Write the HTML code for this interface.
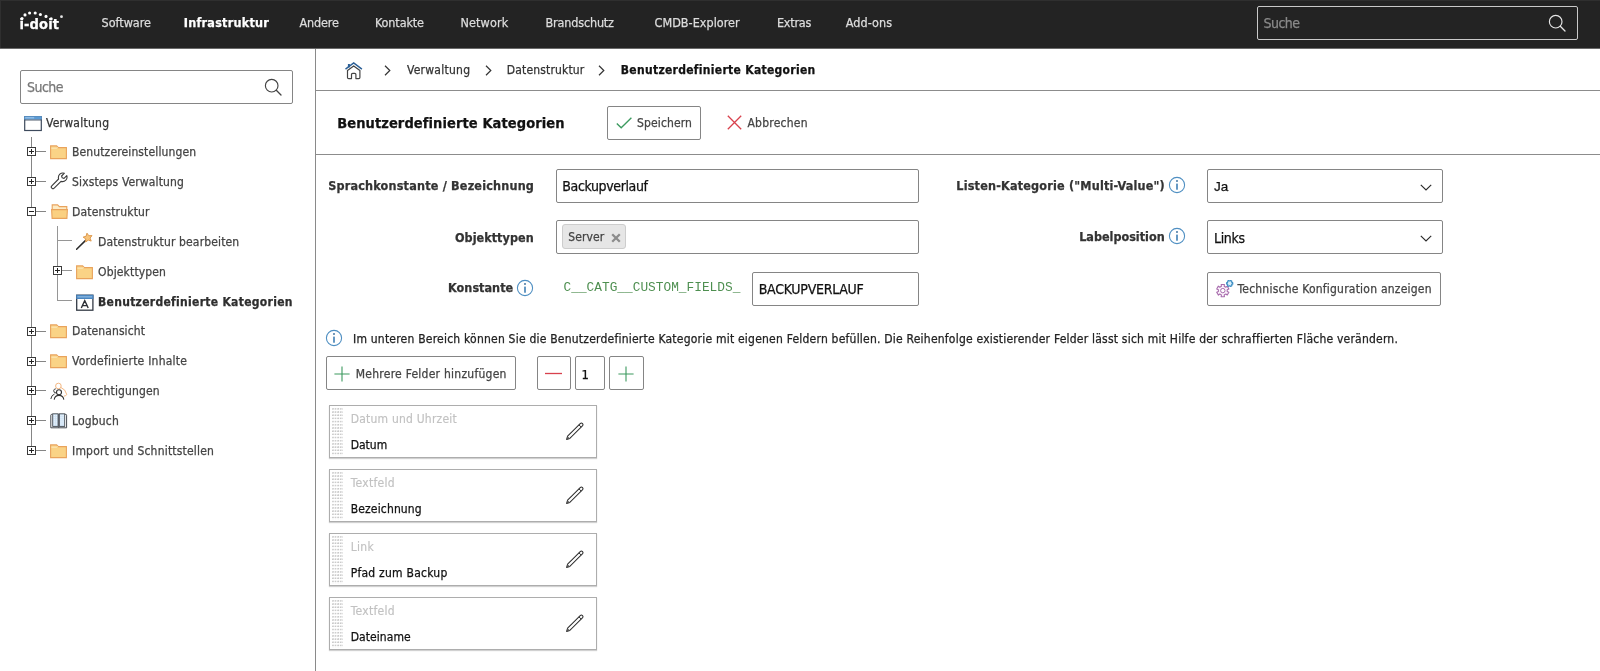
<!DOCTYPE html>
<html lang="de">
<head>
<meta charset="utf-8">
<title>i-doit - Benutzerdefinierte Kategorien</title>
<style>
*{box-sizing:border-box;margin:0;padding:0}
html,body{width:1600px;height:671px;overflow:hidden;background:#fff}
body{position:relative;font-family:"DejaVu Sans Condensed","Liberation Sans",sans-serif;font-size:12px;color:#444}
div,span,a,svg,header,nav,aside,main,section,ul,li,h1,label,button,input,p{position:absolute;display:block}
ul{list-style:none}
a{text-decoration:none;color:inherit}
.t{white-space:nowrap;-webkit-text-stroke:0.25px currentColor}
#top,#side,#main{will-change:transform}
#top{left:0;top:0;width:1600px;height:49px;background:#232323;border-bottom:1px solid #6a6a6a;z-index:2;box-shadow:inset 1px 1px 0 #2f2f2f}
#side{left:0;top:48px;width:315px;height:623px;background:#fff}
#divider{left:315px;top:48px;width:1px;height:623px;background:#8a8a8a}
#main{left:316px;top:48px;width:1284px;height:623px;background:#fff}
.hl{background:#8c8c8c;height:1px}
.inp{border:1px solid #858585;border-radius:2px;background:#fff}
.btn{border:1px solid #858585;border-radius:2px;background:#fff}
.card{border:1px solid #adadad;background:#fff;box-shadow:0 1px 1px rgba(0,0,0,.18)}
.grip{background-image:radial-gradient(circle at 1px 1px,#c8c8c8 0.7px,transparent 1.05px);background-size:2.6px 3.2px}
.tl{background:#858585}
.tl2{background:#969696}
</style>
</head>
<body>
<header id="top">
<a class="t" id="t0" style='left:19.4px;top:14px;font-size:14.5px;line-height:20px;color:#fff;font-weight:bold;letter-spacing:0.14px;'>i-doit</a>
<svg style="left:18px;top:10px" width="48" height="12" viewBox="0 0 48 12" ><circle cx="4" cy="8.6" r="1.55" fill="#fff"/><circle cx="7" cy="4.9" r="1.55" fill="#fff"/><circle cx="11.6" cy="3" r="1.55" fill="#fff"/><circle cx="17.2" cy="3" r="1.55" fill="#fff"/><circle cx="22.4" cy="4.5" r="1.55" fill="#fff"/><circle cx="28" cy="6.4" r="1.55" fill="#fff"/><circle cx="33.2" cy="8.7" r="1.55" fill="#fff"/><circle cx="43.5" cy="6.7" r="1.4" fill="#e4e4e4"/></svg>
<nav><ul><li><a class="t" id="t1" style='left:101.5px;top:13px;font-size:12.5px;line-height:20px;color:#ddd;letter-spacing:-0.00px;'>Software</a></li><li><a class="t" id="t2" style='left:183.8px;top:13px;font-size:12.5px;line-height:20px;color:#fff;font-weight:bold;letter-spacing:0.23px;'>Infrastruktur</a></li><li><a class="t" id="t3" style='left:299.5px;top:13px;font-size:12.5px;line-height:20px;color:#ddd;letter-spacing:-0.13px;'>Andere</a></li><li><a class="t" id="t4" style='left:375px;top:13px;font-size:12.5px;line-height:20px;color:#ddd;letter-spacing:-0.13px;'>Kontakte</a></li><li><a class="t" id="t5" style='left:460.4px;top:13px;font-size:12.5px;line-height:20px;color:#ddd;letter-spacing:0.14px;'>Network</a></li><li><a class="t" id="t6" style='left:545.5px;top:13px;font-size:12.5px;line-height:20px;color:#ddd;letter-spacing:-0.16px;'>Brandschutz</a></li><li><a class="t" id="t7" style='left:654.6px;top:13px;font-size:12.5px;line-height:20px;color:#ddd;letter-spacing:0.02px;'>CMDB-Explorer</a></li><li><a class="t" id="t8" style='left:777px;top:13px;font-size:12.5px;line-height:20px;color:#ddd;letter-spacing:-0.23px;'>Extras</a></li><li><a class="t" id="t9" style='left:845.8px;top:13px;font-size:12.5px;line-height:20px;color:#ddd;letter-spacing:0.05px;'>Add-ons</a></li></ul></nav>
<div style="left:1257px;top:6px;width:321px;height:34px;border:1px solid #c9c9c9;border-radius:2px;"></div>
<span class="t" id="t10" style='left:1263.5px;top:13px;font-size:14px;line-height:20px;color:#8a8a8a;letter-spacing:-0.54px;'>Suche</span>
<svg style="left:1548px;top:14px" width="18" height="18" viewBox="0 0 18 18" ><circle cx="7.7" cy="7.7" r="6.3" fill="none" stroke="#e6e6e6" stroke-width="1.15"/><path d="M12.3 12.3 L17 17" stroke="#e6e6e6" stroke-width="1.3" stroke-linecap="round"/></svg>
</header>
<aside id="side">
<div class="inp" style="left:20px;top:22px;width:273px;height:34px;"></div>
<span class="t" id="t11" style='left:27px;top:29px;font-size:14px;line-height:20px;color:#777;letter-spacing:-0.54px;'>Suche</span>
<svg style="left:264.3px;top:29.6px" width="18" height="18" viewBox="0 0 18 18" ><circle cx="7.7" cy="7.7" r="6.3" fill="none" stroke="#444" stroke-width="1.15"/><path d="M12.3 12.3 L17 17" stroke="#444" stroke-width="1.3" stroke-linecap="round"/></svg>
<svg style="left:24px;top:67.5px" width="18" height="16" viewBox="0 0 18 16" ><rect x="0.7" y="0.7" width="16.6" height="13.8" fill="#fff" stroke="#3d4a5c" stroke-width="1.2"/><rect x="0.2" y="0.2" width="17.6" height="3.4" fill="#5b9bd5"/><rect x="1.2" y="1.2" width="9" height="1.2" fill="#9cc6ec"/><path d="M0.7 4 H17.3" stroke="#3d4a5c" stroke-width="0.9"/></svg>
<span class="t" id="t12" style='left:46px;top:65px;font-size:12px;line-height:20px;color:#333;letter-spacing:0.25px;'>Verwaltung</span>
<div class="tl" style="left:31px;top:89px;width:1px;height:313px;"></div>
<div class="tl tl2" style="left:57px;top:178px;width:1px;height:75px;"></div>
<div class="tl" style="left:31px;top:103px;width:14.5px;height:1px;"></div>
<svg style="left:27px;top:99px" width="9" height="9" viewBox="0 0 9 9" shape-rendering="crispEdges"><rect x="0.5" y="0.5" width="8" height="8" fill="#fff" stroke="#3c3c3c"/><path d="M2 4.5 H7 M4.5 2 V7" stroke="#222"/></svg>
<svg style="left:50.2px;top:96.5px" width="17" height="15" viewBox="0 0 17 15" ><path d="M0.6 0.9 H6.6 L8.4 2.6 H16.4 V13.6 H0.6 Z" fill="#fad386" stroke="#e9a35c" stroke-width="1.1" stroke-linejoin="miter"/><path d="M1.4 3.2 H6.6 L7.6 2.4" fill="none" stroke="#fde9bd" stroke-width="1"/></svg>
<a class="t" id="t13" style='left:72px;top:94px;font-size:12px;line-height:20px;color:#444;letter-spacing:0.13px;'>Benutzereinstellungen</a>
<div class="tl" style="left:31px;top:133px;width:14.5px;height:1px;"></div>
<svg style="left:27px;top:129px" width="9" height="9" viewBox="0 0 9 9" shape-rendering="crispEdges"><rect x="0.5" y="0.5" width="8" height="8" fill="#fff" stroke="#3c3c3c"/><path d="M2 4.5 H7 M4.5 2 V7" stroke="#222"/></svg>
<svg style="left:50px;top:124.3px" width="18" height="18" viewBox="0 0 18 18" ><path d="M1.8 16.2 Q0.6 15 1.8 13.8 L8.6 7 Q7.8 4.2 9.8 2.2 Q11.8 0.4 14.4 1.2 L11.6 4 L12.2 5.8 L14 6.4 L16.8 3.6 Q17.6 6.2 15.8 8.2 Q13.8 10.2 11 9.4 L4.2 16.2 Q3 17.4 1.8 16.2 Z" fill="#fff" stroke="#3a3a3a" stroke-width="1.1" stroke-linejoin="round"/></svg>
<a class="t" id="t14" style='left:72px;top:124px;font-size:12px;line-height:20px;color:#444;letter-spacing:0.14px;'>Sixsteps Verwaltung</a>
<div class="tl" style="left:31px;top:163px;width:14.5px;height:1px;"></div>
<svg style="left:27px;top:159px" width="9" height="9" viewBox="0 0 9 9" shape-rendering="crispEdges"><rect x="0.5" y="0.5" width="8" height="8" fill="#fff" stroke="#3c3c3c"/><path d="M2 4.5 H7" stroke="#222"/></svg>
<svg style="left:50.6px;top:156px" width="17" height="16" viewBox="0 0 17 16" ><path d="M1.2 5.6 V0.9 H6.6 L8.4 2.6 H15.8 V5.6" fill="#fdebc4" stroke="#e9a35c" stroke-width="1.1" stroke-linejoin="miter"/><path d="M0.6 5.6 H16.4 L15.9 14.4 H1.1 Z" fill="#fad081" stroke="#e9a35c" stroke-width="1.1" stroke-linejoin="miter"/></svg>
<a class="t" id="t15" style='left:72px;top:154px;font-size:12px;line-height:20px;color:#444;letter-spacing:0.16px;'>Datenstruktur</a>
<div class="tl tl2" style="left:57px;top:192px;width:14.5px;height:1px;"></div>
<svg style="left:76px;top:184.2px" width="18" height="18" viewBox="0 0 18 18" ><path d="M0.6 17.2 L9.6 8.4" stroke="#2b2b2b" stroke-width="1.5" stroke-linecap="round"/><path d="M10.98 1.17 L12.81 3.73 L15.95 3.59 L14.08 6.12 L15.18 9.06 L12.20 8.07 L9.74 10.02 L9.77 6.88 L7.15 5.15 L10.15 4.20 Z" fill="#f8c47a" stroke="#dd9a50" stroke-width="1" stroke-linejoin="round"/></svg>
<a class="t" id="t16" style='left:98px;top:184px;font-size:12px;line-height:20px;color:#444;letter-spacing:0.15px;'>Datenstruktur bearbeiten</a>
<div class="tl tl2" style="left:57px;top:222px;width:14.5px;height:1px;"></div>
<svg style="left:53px;top:218px" width="9" height="9" viewBox="0 0 9 9" shape-rendering="crispEdges"><rect x="0.5" y="0.5" width="8" height="8" fill="#fff" stroke="#3c3c3c"/><path d="M2 4.5 H7 M4.5 2 V7" stroke="#222"/></svg>
<svg style="left:76.2px;top:216.7px" width="17" height="15" viewBox="0 0 17 15" ><path d="M0.6 0.9 H6.6 L8.4 2.6 H16.4 V13.6 H0.6 Z" fill="#fad386" stroke="#e9a35c" stroke-width="1.1" stroke-linejoin="miter"/><path d="M1.4 3.2 H6.6 L7.6 2.4" fill="none" stroke="#fde9bd" stroke-width="1"/></svg>
<a class="t" id="t17" style='left:98px;top:214px;font-size:12px;line-height:20px;color:#444;letter-spacing:0.15px;'>Objekttypen</a>
<div class="tl tl2" style="left:57px;top:252px;width:14.5px;height:1px;"></div>
<svg style="left:76px;top:245.7px" width="18" height="17" viewBox="0 0 18 17" ><rect x="0.7" y="1.2" width="16.2" height="15" fill="#fff" stroke="#333a45" stroke-width="1.3"/><rect x="0.2" y="0.8" width="17.2" height="4.2" fill="#4a86c0"/><path d="M1.4 2.9 H16.2" stroke="#a9d0f2" stroke-width="0.9"/><path d="M5.3 14 L8.75 6.6 L12.2 14 M6.6 11.6 H10.9" fill="none" stroke="#2c2f36" stroke-width="1.4"/></svg>
<a class="t" id="t18" style='left:98px;top:244px;font-size:12px;line-height:20px;color:#2e2e2e;font-weight:bold;letter-spacing:0.30px;'>Benutzerdefinierte Kategorien</a>
<div class="tl" style="left:31px;top:283px;width:14.5px;height:1px;"></div>
<svg style="left:27px;top:279px" width="9" height="9" viewBox="0 0 9 9" shape-rendering="crispEdges"><rect x="0.5" y="0.5" width="8" height="8" fill="#fff" stroke="#3c3c3c"/><path d="M2 4.5 H7 M4.5 2 V7" stroke="#222"/></svg>
<svg style="left:50.2px;top:276.1px" width="17" height="15" viewBox="0 0 17 15" ><path d="M0.6 0.9 H6.6 L8.4 2.6 H16.4 V13.6 H0.6 Z" fill="#fad386" stroke="#e9a35c" stroke-width="1.1" stroke-linejoin="miter"/><path d="M1.4 3.2 H6.6 L7.6 2.4" fill="none" stroke="#fde9bd" stroke-width="1"/></svg>
<a class="t" id="t19" style='left:72px;top:273px;font-size:12px;line-height:20px;color:#444;letter-spacing:0.11px;'>Datenansicht</a>
<div class="tl" style="left:31px;top:313px;width:14.5px;height:1px;"></div>
<svg style="left:27px;top:309px" width="9" height="9" viewBox="0 0 9 9" shape-rendering="crispEdges"><rect x="0.5" y="0.5" width="8" height="8" fill="#fff" stroke="#3c3c3c"/><path d="M2 4.5 H7 M4.5 2 V7" stroke="#222"/></svg>
<svg style="left:50.2px;top:306px" width="17" height="15" viewBox="0 0 17 15" ><path d="M0.6 0.9 H6.6 L8.4 2.6 H16.4 V13.6 H0.6 Z" fill="#fad386" stroke="#e9a35c" stroke-width="1.1" stroke-linejoin="miter"/><path d="M1.4 3.2 H6.6 L7.6 2.4" fill="none" stroke="#fde9bd" stroke-width="1"/></svg>
<a class="t" id="t20" style='left:72px;top:303px;font-size:12px;line-height:20px;color:#444;letter-spacing:0.24px;'>Vordefinierte Inhalte</a>
<div class="tl" style="left:31px;top:342px;width:14.5px;height:1px;"></div>
<svg style="left:27px;top:338px" width="9" height="9" viewBox="0 0 9 9" shape-rendering="crispEdges"><rect x="0.5" y="0.5" width="8" height="8" fill="#fff" stroke="#3c3c3c"/><path d="M2 4.5 H7 M4.5 2 V7" stroke="#222"/></svg>
<svg style="left:50px;top:333.9px" width="18" height="18" viewBox="0 0 18 18" ><circle cx="8.4" cy="4" r="2.8" fill="none" stroke="#f4b781" stroke-width="1"/><path d="M10.8 5.4 Q15.6 7.2 16.8 12.6 Q15.6 14 13.8 14.2" fill="none" stroke="#f4b781" stroke-width="1"/><path d="M6 11 Q3.6 10.8 3.7 8.6 Q3.9 6.9 5.8 6.8" fill="none" stroke="#3a3a3a" stroke-width="1"/><path d="M0.8 17 Q1.4 13 4.6 12" fill="none" stroke="#3a3a3a" stroke-width="1"/><circle cx="9" cy="10.2" r="2.5" fill="#fff" stroke="#333" stroke-width="1.1"/><path d="M4.2 17.6 Q4.8 13.4 9 13.4 Q13.2 13.4 13.8 17.6" fill="none" stroke="#333" stroke-width="1.1"/></svg>
<a class="t" id="t21" style='left:72px;top:333px;font-size:12px;line-height:20px;color:#444;letter-spacing:0.15px;'>Berechtigungen</a>
<div class="tl" style="left:31px;top:372px;width:14.5px;height:1px;"></div>
<svg style="left:27px;top:368px" width="9" height="9" viewBox="0 0 9 9" shape-rendering="crispEdges"><rect x="0.5" y="0.5" width="8" height="8" fill="#fff" stroke="#3c3c3c"/><path d="M2 4.5 H7 M4.5 2 V7" stroke="#222"/></svg>
<svg style="left:50px;top:364.8px" width="18" height="17" viewBox="0 0 18 17" ><path d="M2.4 1.4 H1.6 Q0.8 1.4 0.8 2.2 V14.8 H16.6 V2.2 Q16.6 1.4 15.8 1.4 H15" fill="#fff" stroke="#454b52" stroke-width="1" stroke-linejoin="round"/><rect x="2.7" y="0.8" width="5.4" height="12.6" fill="#cfe3f5" stroke="#454b52" stroke-width="0.9"/><rect x="9.3" y="0.8" width="5.4" height="12.6" fill="#cfe3f5" stroke="#454b52" stroke-width="0.9"/><path d="M4.4 2 V12.4 M6.4 2 V12.4 M11 2 V12.4 M13 2 V12.4" stroke="#f5f9fd" stroke-width="0.8" stroke-dasharray="1.2 0.9"/><path d="M8.7 1 V14.8" stroke="#454b52" stroke-width="0.9"/></svg>
<a class="t" id="t22" style='left:72px;top:363px;font-size:12px;line-height:20px;color:#444;letter-spacing:0.17px;'>Logbuch</a>
<div class="tl" style="left:31px;top:402px;width:14.5px;height:1px;"></div>
<svg style="left:27px;top:398px" width="9" height="9" viewBox="0 0 9 9" shape-rendering="crispEdges"><rect x="0.5" y="0.5" width="8" height="8" fill="#fff" stroke="#3c3c3c"/><path d="M2 4.5 H7 M4.5 2 V7" stroke="#222"/></svg>
<svg style="left:50.2px;top:395.9px" width="17" height="15" viewBox="0 0 17 15" ><path d="M0.6 0.9 H6.6 L8.4 2.6 H16.4 V13.6 H0.6 Z" fill="#fad386" stroke="#e9a35c" stroke-width="1.1" stroke-linejoin="miter"/><path d="M1.4 3.2 H6.6 L7.6 2.4" fill="none" stroke="#fde9bd" stroke-width="1"/></svg>
<a class="t" id="t23" style='left:72px;top:393px;font-size:12px;line-height:20px;color:#444;letter-spacing:0.20px;'>Import und Schnittstellen</a>
</aside>
<div id="divider"></div>
<main id="main">
<svg style="left:29px;top:13.5px" width="18" height="18" viewBox="0 0 18 18" ><path d="M3.9 2 V5.4" stroke="#2b5f96" stroke-width="2"/><path d="M0.5 7.2 L8.7 1 L16.9 7.2" fill="none" stroke="#2b5f96" stroke-width="1.5" stroke-linejoin="miter"/><path d="M2.5 8.6 L8.7 3.9 L14.9 8.6 V15.4 Q14.9 16.6 13.7 16.6 H10.9 V12.6 Q10.9 11.4 9.7 11.4 H7.7 Q6.5 11.4 6.5 12.6 V16.6 H3.7 Q2.5 16.6 2.5 15.4 Z" fill="none" stroke="#444" stroke-width="1.2" stroke-linejoin="round"/></svg>
<svg style="left:68px;top:16.5px" width="7" height="11" viewBox="0 0 7 11" ><path d="M1 0.8 L5.8 5.5 L1 10.2" fill="none" stroke="#333" stroke-width="1.2"/></svg>
<a class="t" id="t24" style='left:91px;top:12px;font-size:12px;line-height:20px;color:#333;letter-spacing:0.25px;'>Verwaltung</a>
<svg style="left:169px;top:16.5px" width="7" height="11" viewBox="0 0 7 11" ><path d="M1 0.8 L5.8 5.5 L1 10.2" fill="none" stroke="#333" stroke-width="1.2"/></svg>
<a class="t" id="t25" style='left:190.8px;top:12px;font-size:12px;line-height:20px;color:#333;letter-spacing:0.16px;'>Datenstruktur</a>
<svg style="left:282px;top:16.5px" width="7" height="11" viewBox="0 0 7 11" ><path d="M1 0.8 L5.8 5.5 L1 10.2" fill="none" stroke="#333" stroke-width="1.2"/></svg>
<span class="t" id="t26" style='left:304.8px;top:12px;font-size:12px;line-height:20px;color:#111;font-weight:bold;letter-spacing:0.30px;'>Benutzerdefinierte Kategorien</span>
<div class="hl" style="left:0px;top:42px;width:1284px;height:1px;"></div>
<h1 class="t" id="t27" style='left:21.2px;top:65px;font-size:14.5px;line-height:20px;color:#111;font-weight:bold;letter-spacing:0.09px;'>Benutzerdefinierte Kategorien</h1>
<div class="btn" style="left:291px;top:58px;width:94px;height:34px;"></div>
<svg style="left:300px;top:69.3px" width="17" height="13" viewBox="0 0 17 13" ><path d="M0.8 6.4 L5.2 10.8 L15.4 0.8" fill="none" stroke="#3c9a5f" stroke-width="1.35"/></svg>
<span class="t" id="t28" style='left:321px;top:65px;font-size:12px;line-height:20px;color:#444;letter-spacing:0.14px;'>Speichern</span>
<svg style="left:411.3px;top:67.2px" width="15" height="15" viewBox="0 0 15 15" ><path d="M0.8 0.8 L14.2 14.2 M14.2 0.8 L0.8 14.2" fill="none" stroke="#d8414d" stroke-width="1.3"/></svg>
<span class="t" id="t29" style='left:431.5px;top:65px;font-size:12px;line-height:20px;color:#444;letter-spacing:0.23px;'>Abbrechen</span>
<div class="hl" style="left:0px;top:106px;width:1284px;height:1px;"></div>
<label class="t" id="t30" style='left:12.2px;top:128px;font-size:12.5px;line-height:20px;color:#333;font-weight:bold;letter-spacing:0.19px;'>Sprachkonstante / Bezeichnung</label>
<div class="inp" style="left:240px;top:121px;width:363px;height:34px;"></div>
<span class="t" id="t31" style='left:246.3px;top:128px;font-size:14px;line-height:20px;color:#111;letter-spacing:-0.37px;'>Backupverlauf</span>
<label class="t" id="t32" style='left:139px;top:180px;font-size:12.5px;line-height:20px;color:#333;font-weight:bold;letter-spacing:0.03px;'>Objekttypen</label>
<div class="inp" style="left:240px;top:172px;width:363px;height:34px;"></div>
<div style="left:246px;top:176px;width:64px;height:25px;background:#e6e6e6;border:1px solid #cdcdcd;border-radius:3px;"></div>
<span class="t" id="t33" style='left:252.3px;top:179px;font-size:12px;line-height:20px;color:#444;letter-spacing:0.12px;'>Server</span>
<svg style="left:295px;top:185px" width="10" height="10" viewBox="0 0 10 10" ><path d="M1.2 1.2 L8.8 8.8 M8.8 1.2 L1.2 8.8" stroke="#8c8c8c" stroke-width="2.3"/></svg>
<label class="t" id="t34" style='left:132.1px;top:230px;font-size:12.5px;line-height:20px;color:#333;font-weight:bold;letter-spacing:0.02px;'>Konstante</label>
<svg style="left:200px;top:230.5px" width="18" height="18" viewBox="0 0 18 18" ><circle cx="9" cy="9" r="7.6" fill="#fff" stroke="#4f8fc2" stroke-width="1.1"/><rect x="8.2" y="7.6" width="1.6" height="6.2" rx="0.5" fill="#3f7fb5"/><circle cx="9" cy="5" r="1.05" fill="#4f7fa8"/></svg>
<span class="t" id="t35" style='left:247.5px;top:230px;font-size:12.8px;line-height:20px;color:#4e8f50;font-family:"Liberation Mono","DejaVu Sans Mono",monospace;letter-spacing:0.01px;-webkit-text-stroke:0;'>C__CATG__CUSTOM_FIELDS_</span>
<div class="inp" style="left:436px;top:224px;width:167px;height:34px;"></div>
<span class="t" id="t36" style='left:442.7px;top:231px;font-size:14px;line-height:20px;color:#111;letter-spacing:-0.26px;'>BACKUPVERLAUF</span>
<label class="t" id="t37" style='left:640.3px;top:128px;font-size:12.5px;line-height:20px;color:#333;font-weight:bold;letter-spacing:0.19px;'>Listen-Kategorie ("Multi-Value")</label>
<svg style="left:851.7px;top:127.9px" width="18" height="18" viewBox="0 0 18 18" ><circle cx="9" cy="9" r="7.6" fill="#fff" stroke="#4f8fc2" stroke-width="1.1"/><rect x="8.2" y="7.6" width="1.6" height="6.2" rx="0.5" fill="#3f7fb5"/><circle cx="9" cy="5" r="1.05" fill="#4f7fa8"/></svg>
<div class="inp" style="left:891px;top:121px;width:236px;height:34px;"></div>
<span class="t" id="t38" style='left:898px;top:129px;font-size:13.5px;line-height:20px;color:#111;font-family:"Liberation Sans",sans-serif;'>Ja</span>
<svg style="left:1103.5px;top:135.5px" width="12" height="7" viewBox="0 0 12 7" ><path d="M0.8 0.8 L6 6 L11.2 0.8" fill="none" stroke="#2a2a2a" stroke-width="1.15"/></svg>
<label class="t" id="t39" style='left:763.2px;top:179px;font-size:12.5px;line-height:20px;color:#333;font-weight:bold;letter-spacing:-0.01px;'>Labelposition</label>
<svg style="left:851.7px;top:179.4px" width="18" height="18" viewBox="0 0 18 18" ><circle cx="9" cy="9" r="7.6" fill="#fff" stroke="#4f8fc2" stroke-width="1.1"/><rect x="8.2" y="7.6" width="1.6" height="6.2" rx="0.5" fill="#3f7fb5"/><circle cx="9" cy="5" r="1.05" fill="#4f7fa8"/></svg>
<div class="inp" style="left:891px;top:172px;width:236px;height:34px;"></div>
<span class="t" id="t40" style='left:898px;top:180px;font-size:14px;line-height:20px;color:#111;letter-spacing:-0.34px;'>Links</span>
<svg style="left:1103.5px;top:187px" width="12" height="7" viewBox="0 0 12 7" ><path d="M0.8 0.8 L6 6 L11.2 0.8" fill="none" stroke="#2a2a2a" stroke-width="1.15"/></svg>
<div class="btn" style="left:891px;top:224px;width:234px;height:34px;"></div>
<svg style="left:899.5px;top:232px" width="18" height="18" viewBox="0 0 18 18" ><path d="M12.89 12.23 L11.25 15.05 L9.81 13.94 L8.19 14.88 L8.43 16.69 L5.17 16.69 L5.41 14.88 L3.79 13.94 L2.35 15.05 L0.71 12.23 L2.40 11.54 L2.40 9.66 L0.71 8.97 L2.35 6.15 L3.79 7.26 L5.41 6.32 L5.17 4.51 L8.43 4.51 L8.19 6.32 L9.81 7.26 L11.25 6.15 L12.89 8.97 L11.20 9.66 L11.20 11.54 Z" fill="#fbf3fb" stroke="#a86cad" stroke-width="1.1" stroke-linejoin="round"/><circle cx="6.8" cy="10.6" r="2.2" fill="#fff" stroke="#a86cad" stroke-width="1"/><path d="M16.79 2.57 L16.79 4.23 L15.98 4.14 L15.48 5.01 L15.96 5.66 L14.53 6.49 L14.20 5.75 L13.20 5.75 L12.87 6.49 L11.44 5.66 L11.92 5.01 L11.42 4.14 L10.61 4.23 L10.61 2.57 L11.42 2.66 L11.92 1.79 L11.44 1.14 L12.87 0.31 L13.20 1.05 L14.20 1.05 L14.53 0.31 L15.96 1.14 L15.48 1.79 L15.98 2.66 Z" fill="#d8effb" stroke="#3f8fc4" stroke-width="1.1" stroke-linejoin="round"/></svg>
<span class="t" id="t41" style='left:921.5px;top:231px;font-size:12px;line-height:20px;color:#444;letter-spacing:0.22px;'>Technische Konfiguration anzeigen</span>
<svg style="left:9px;top:280.5px" width="18" height="18" viewBox="0 0 18 18" ><circle cx="9" cy="9" r="7.6" fill="#fff" stroke="#4f8fc2" stroke-width="1.1"/><rect x="8.2" y="7.6" width="1.6" height="6.2" rx="0.5" fill="#3f7fb5"/><circle cx="9" cy="5" r="1.05" fill="#4f7fa8"/></svg>
<p class="t" id="t42" style='left:37px;top:281px;font-size:12px;line-height:20px;color:#222;letter-spacing:0.22px;'>Im unteren Bereich können Sie die Benutzerdefinierte Kategorie mit eigenen Feldern befüllen. Die Reihenfolge existierender Felder lässt sich mit Hilfe der schraffierten Fläche verändern.</p>
<div class="btn" style="left:10px;top:308px;width:190px;height:34px;"></div>
<svg style="left:18px;top:317.5px" width="16" height="16" viewBox="0 0 16 16" ><path d="M8 0.4 V15.6 M0.4 8 H15.6" stroke="#3c9a5f" stroke-width="1.1"/></svg>
<span class="t" id="t43" style='left:39.8px;top:316px;font-size:12px;line-height:20px;color:#444;letter-spacing:0.25px;'>Mehrere Felder hinzufügen</span>
<div class="btn" style="left:221px;top:308px;width:34px;height:34px;"></div>
<svg style="left:229px;top:324px" width="17" height="3" viewBox="0 0 17 3" ><path d="M0 1.5 H17" stroke="#d8414d" stroke-width="1.3"/></svg>
<div class="inp" style="left:259px;top:308px;width:30px;height:34px;"></div>
<span class="t" id="t44" style='left:265.6px;top:317px;font-size:13px;line-height:20px;color:#111;'>1</span>
<div class="btn" style="left:293px;top:308px;width:35px;height:34px;"></div>
<svg style="left:302px;top:317.5px" width="16" height="16" viewBox="0 0 16 16" ><path d="M8 0.4 V15.6 M0.4 8 H15.6" stroke="#3c9a5f" stroke-width="1.1"/></svg>
<div class="card" style="left:13px;top:357px;width:268px;height:53px;"></div>
<div class="grip" style="left:16px;top:359.5px;width:11px;height:48px;"></div>
<span class="t" id="t45" style='left:34.7px;top:361px;font-size:12px;line-height:20px;color:#c2c2c2;letter-spacing:0.21px;-webkit-text-stroke:0.15px currentColor;'>Datum und Uhrzeit</span>
<span class="t" id="t46" style='left:34.7px;top:387px;font-size:12px;line-height:20px;color:#111;letter-spacing:-0.01px;'>Datum</span>
<svg style="left:249.5px;top:374px" width="18" height="18" viewBox="0 0 18 18" ><path d="M0.6 17.4 L1.6 14.2 L14.2 1.6 Q15.4 0.5 16.5 1.6 Q17.5 2.7 16.4 3.8 L3.8 16.4 Z" fill="#fff" stroke="#2e2e2e" stroke-width="1.05" stroke-linejoin="round"/><path d="M13 2.9 L15.1 5" stroke="#2e2e2e" stroke-width="1"/><path d="M0.6 17.4 L1.6 14.2 L3.8 16.4 Z" fill="#555"/></svg>
<div class="card" style="left:13px;top:421px;width:268px;height:53px;"></div>
<div class="grip" style="left:16px;top:423.5px;width:11px;height:48px;"></div>
<span class="t" id="t47" style='left:34.7px;top:425px;font-size:12px;line-height:20px;color:#c2c2c2;letter-spacing:0.30px;-webkit-text-stroke:0.15px currentColor;'>Textfeld</span>
<span class="t" id="t48" style='left:34.7px;top:451px;font-size:12px;line-height:20px;color:#111;letter-spacing:0.15px;'>Bezeichnung</span>
<svg style="left:249.5px;top:438px" width="18" height="18" viewBox="0 0 18 18" ><path d="M0.6 17.4 L1.6 14.2 L14.2 1.6 Q15.4 0.5 16.5 1.6 Q17.5 2.7 16.4 3.8 L3.8 16.4 Z" fill="#fff" stroke="#2e2e2e" stroke-width="1.05" stroke-linejoin="round"/><path d="M13 2.9 L15.1 5" stroke="#2e2e2e" stroke-width="1"/><path d="M0.6 17.4 L1.6 14.2 L3.8 16.4 Z" fill="#555"/></svg>
<div class="card" style="left:13px;top:485px;width:268px;height:53px;"></div>
<div class="grip" style="left:16px;top:487.5px;width:11px;height:48px;"></div>
<span class="t" id="t49" style='left:34.7px;top:489px;font-size:12px;line-height:20px;color:#c2c2c2;letter-spacing:0.30px;-webkit-text-stroke:0.15px currentColor;'>Link</span>
<span class="t" id="t50" style='left:34.7px;top:515px;font-size:12px;line-height:20px;color:#111;letter-spacing:0.24px;'>Pfad zum Backup</span>
<svg style="left:249.5px;top:502px" width="18" height="18" viewBox="0 0 18 18" ><path d="M0.6 17.4 L1.6 14.2 L14.2 1.6 Q15.4 0.5 16.5 1.6 Q17.5 2.7 16.4 3.8 L3.8 16.4 Z" fill="#fff" stroke="#2e2e2e" stroke-width="1.05" stroke-linejoin="round"/><path d="M13 2.9 L15.1 5" stroke="#2e2e2e" stroke-width="1"/><path d="M0.6 17.4 L1.6 14.2 L3.8 16.4 Z" fill="#555"/></svg>
<div class="card" style="left:13px;top:549px;width:268px;height:53px;"></div>
<div class="grip" style="left:16px;top:551.5px;width:11px;height:48px;"></div>
<span class="t" id="t51" style='left:34.7px;top:553px;font-size:12px;line-height:20px;color:#c2c2c2;letter-spacing:0.30px;-webkit-text-stroke:0.15px currentColor;'>Textfeld</span>
<span class="t" id="t52" style='left:34.7px;top:579px;font-size:12px;line-height:20px;color:#111;letter-spacing:0.07px;'>Dateiname</span>
<svg style="left:249.5px;top:566px" width="18" height="18" viewBox="0 0 18 18" ><path d="M0.6 17.4 L1.6 14.2 L14.2 1.6 Q15.4 0.5 16.5 1.6 Q17.5 2.7 16.4 3.8 L3.8 16.4 Z" fill="#fff" stroke="#2e2e2e" stroke-width="1.05" stroke-linejoin="round"/><path d="M13 2.9 L15.1 5" stroke="#2e2e2e" stroke-width="1"/><path d="M0.6 17.4 L1.6 14.2 L3.8 16.4 Z" fill="#555"/></svg>
</main>
</body>
</html>
